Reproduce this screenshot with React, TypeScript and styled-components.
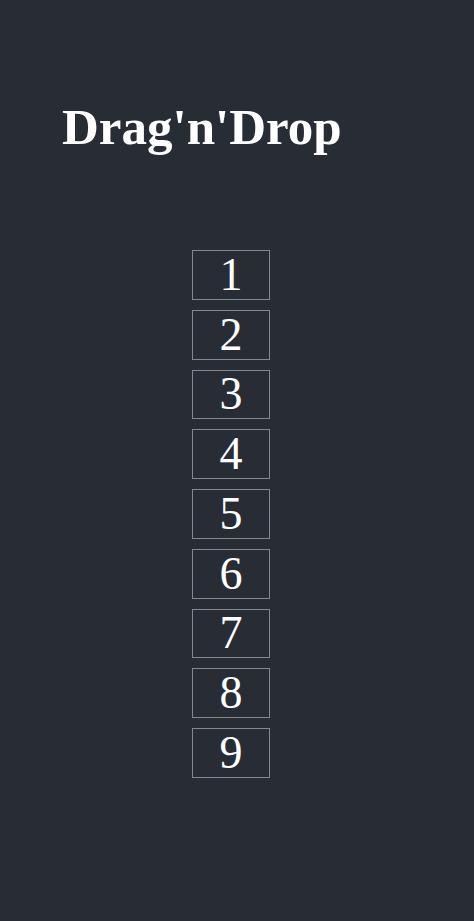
import React from "react";
import styled, { createGlobalStyle } from "styled-components";

const Global = createGlobalStyle`
  html, body { margin: 0; padding: 0; background: #282c34; }
  body { font-family: "Liberation Serif", "Times New Roman", serif; color: #ffffff; }
`;

const Page = styled.div`
  min-height: 921px;
  background: #282c34;
  display: flex;
  flex-direction: column;
`;

const Title = styled.h1`
  margin: 0;
  padding: 97px 0 0 62px;
  font-size: 51px;
  font-weight: bold;
  line-height: 60px;
  color: #ffffff;
`;

const List = styled.ul`
  list-style: none;
  margin: 0;
  padding: 93px 0 0 192px;
  display: flex;
  flex-direction: column;
  gap: 10px;
`;

const Item = styled.li`
  box-sizing: border-box;
  width: 78px;
  height: 49.75px;
  border: 1px solid #85888e;
  display: flex;
  align-items: center;
  justify-content: center;
  font-size: 46px;
  line-height: 1;
  color: #ffffff;
`;

export default function App() {
  const items = [1, 2, 3, 4, 5, 6, 7, 8, 9];
  return (
    <Page>
      <Global />
      <Title>Drag'n'Drop</Title>
      <List>
        {items.map((n) => (
          <Item key={n}>{n}</Item>
        ))}
      </List>
    </Page>
  );
}
